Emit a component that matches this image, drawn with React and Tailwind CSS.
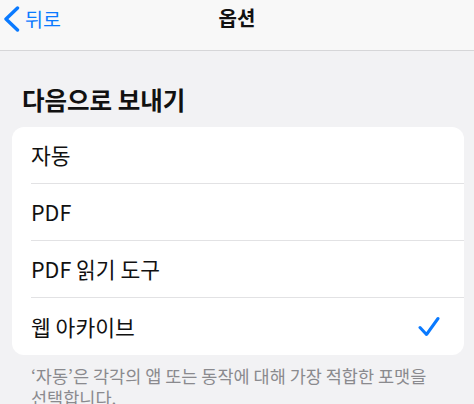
import React from "react";

const KR = { fontFamily: '"Noto Sans CJK KR", "Noto Sans", sans-serif' };

function Row({ label, last, checked }) {
  return (
    <div className="pl-[19px] h-[57px]">
      <div className={"h-full flex items-center pr-[24px] " + (last ? "" : "border-b border-[#e2e2e4]")}>
        <span className="flex-1 text-[21.5px] text-[#111111] leading-none">{label}</span>
        {checked && (
          <svg width="22" height="21" viewBox="0 0 22 21" fill="none">
            <path d="M2 11.5 L8.5 18.5 L20 2.5" stroke="#0a7aff" strokeWidth="3" strokeLinecap="round" strokeLinejoin="round" />
          </svg>
        )}
      </div>
    </div>
  );
}

export default function App() {
  return (
    <div className="w-[474px] h-[404px] overflow-hidden bg-[#f2f2f4]" style={KR}>
      <div className="h-[51px] bg-[#f8f8f8] border-b border-[#d6d6d8] relative">
        <div className="absolute left-[3px] top-[6px] flex items-center h-[26px]">
          <svg width="17" height="26" viewBox="0 0 17 26" fill="none">
            <path d="M14.5 2 L3 13 L14.5 24" stroke="#0a7aff" strokeWidth="3.4" strokeLinecap="round" strokeLinejoin="round" />
          </svg>
          <span className="ml-[5px] text-[19.5px] leading-none text-[#0a7aff]">뒤로</span>
        </div>
        <div className="absolute left-0 right-0 top-[6px] h-[24px] flex items-center justify-center">
          <span className="text-[20px] font-bold leading-none text-[#111111]">옵션</span>
        </div>
      </div>
      <div className="pl-[22px] pt-[34px] h-[30px] box-content">
        <span className="text-[24.5px] font-bold leading-[30px] text-[#111111]">다음으로 보내기</span>
      </div>
      <div className="mt-[12px] ml-[12px] mr-[10px] bg-white rounded-[12px] overflow-hidden">
        <Row label="자동" />
        <Row label="PDF" />
        <Row label="PDF 읽기 도구" />
        <Row label="웹 아카이브" last checked />
      </div>
      <div className="pl-[31px] pr-[20px] pt-[10px] text-[17.5px] leading-[22px] text-[#8a8a8e] break-keep">
        ‘자동’은 각각의 앱 또는 동작에 대해 가장 적합한 포맷을 선택합니다.
      </div>
    </div>
  );
}
